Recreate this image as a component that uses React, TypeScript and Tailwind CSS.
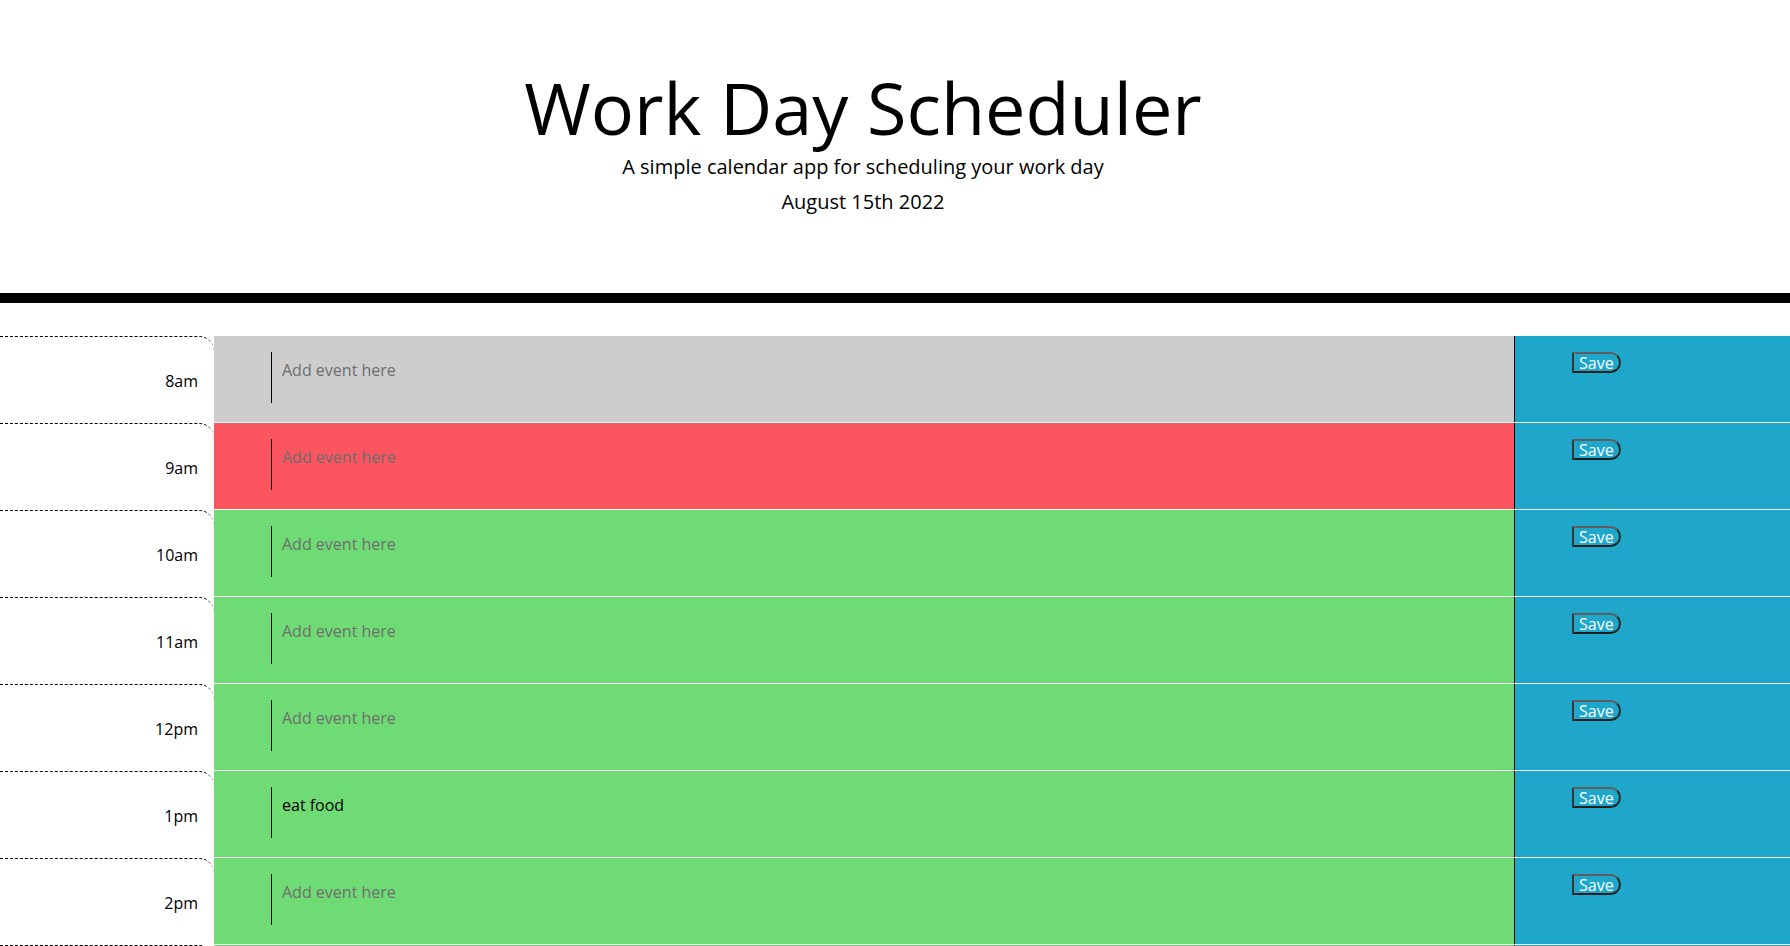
import React from "react";

type Row = { hour: string; state: "past" | "present" | "future"; text?: string };

const rows: Row[] = [
  { hour: "8am", state: "past" },
  { hour: "9am", state: "present" },
  { hour: "10am", state: "future" },
  { hour: "11am", state: "future" },
  { hour: "12pm", state: "future" },
  { hour: "1pm", state: "future", text: "eat food" },
  { hour: "2pm", state: "future" },
  { hour: "3pm", state: "future" },
  { hour: "4pm", state: "future" },
  { hour: "5pm", state: "future" },
];

const bgFor: Record<Row["state"], string> = {
  past: "bg-[#cdcdcd]",
  present: "bg-[#fb5560]",
  future: "bg-[#6fdb75]",
};

function TimeBlock({ row }: { row: Row }) {
  return (
    <div className="flex h-[87px] border-t border-white">
      <div className="flex w-[214px] shrink-0 items-center justify-end rounded-tr-[15px] border-t border-dashed border-black pr-4 pt-[2px] text-[16px] leading-6 text-black">
        {row.hour}
      </div>
      <div className={`flex-1 pl-[57px] pr-4 pt-4 ${bgFor[row.state]}`}>
        <textarea
          className="block h-[51px] w-full resize-none border-l border-black bg-transparent px-[10px] pt-[6px] text-[16px] leading-6 text-black outline-none placeholder:text-[#6e6e6e]"
          placeholder="Add event here"
          defaultValue={row.text ?? ""}
        />
      </div>
      <div className="w-[276px] shrink-0 border-l border-black bg-[#1ea7cb] pl-[57px] pt-4">
        <button
          type="button"
          className="block h-[21px] rounded-r-[11px] border-2 border-t-[#5e5e5e] border-l-[#363636] border-r-[#2a2a2a] border-b-[#1e1e1e] bg-[#1ea7cb] px-[5px] pt-[1px] text-[16px] leading-[17px] text-white"
        >
          Save
        </button>
      </div>
    </div>
  );
}

export default function App() {
  return (
    <div className="h-screen overflow-hidden bg-white font-['Open_Sans',sans-serif] text-black">
      <header className="border-b-[10px] border-black pb-[76px] pt-16">
        <div className="pr-16 text-center">
          <h1 className="text-[72px] font-normal leading-[86px]">Work Day Scheduler</h1>
          <p className="mt-[2px] text-[20px] leading-[30px]">
            A simple calendar app for scheduling your work day
          </p>
          <p className="mt-[5px] text-[20px] leading-[30px]">August 15th 2022</p>
        </div>
      </header>
      <div className="mt-8">
        {rows.map((r) => (
          <TimeBlock key={r.hour} row={r} />
        ))}
      </div>
    </div>
  );
}
